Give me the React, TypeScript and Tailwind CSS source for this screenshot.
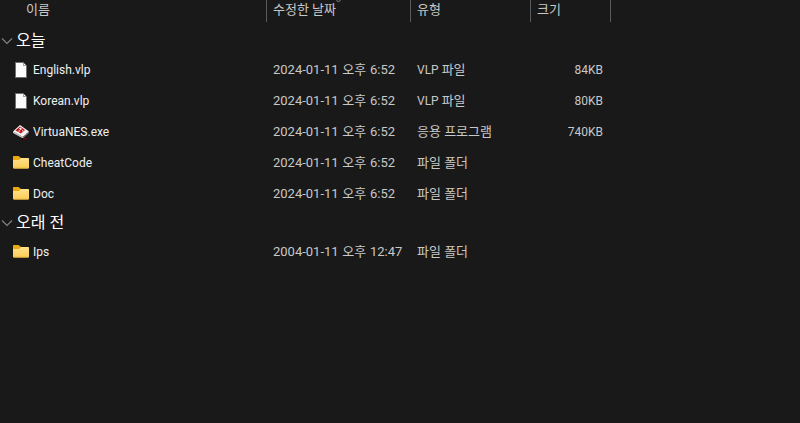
const FONT = "font-['Roboto','Noto_Sans_CJK_KR',sans-serif]";

type Kind = 'file' | 'exe' | 'folder';

// hangul runs in the reference are set noticeably larger than the latin ones
function Mixed({ text }: { text: string }) {
  return (
    <>
      {text.split(/([가-힣]+(?: [가-힣]+)*)/).map((part, i) =>
        /[가-힣]/.test(part) ? (
          <span key={i} className="text-[13px]">
            {part}
          </span>
        ) : (
          part
        )
      )}
    </>
  );
}

function Chevron() {
  return (
    <svg width="12" height="8" viewBox="0 0 12 8" className="text-[#858585]">
      <path d="M1 1.5L6 6.5L11 1.5" fill="none" stroke="currentColor" strokeWidth="1.1" />
    </svg>
  );
}

function FileIcon() {
  return (
    <svg width="16" height="16" viewBox="0 0 16 16" shapeRendering="crispEdges">
      <path d="M2.5 0.5H10.5L13.5 3.5V15.5H2.5Z" fill="#fcfcfc" stroke="#6e6e6e" />
      <path d="M10 1H11V3H13V4H10Z" fill="#a0a0a0" />
    </svg>
  );
}

function FolderIcon() {
  return (
    <svg width="16" height="16" viewBox="0 0 16 16">
      <defs>
        <linearGradient id="folderBody" x1="0" y1="0" x2="0" y2="1">
          <stop offset="0" stopColor="#ffe28a" />
          <stop offset="1" stopColor="#fbcd55" />
        </linearGradient>
      </defs>
      <path d="M0 2C0 1.4 .4 1 1 1H5.5L8 3V5H0Z" fill="#eba80f" />
      <path d="M0 5H6L8 3H15C15.6 3 16 3.4 16 4V12.5C16 13.2 15.6 13.5 15 13.5H1C.4 13.5 0 13.2 0 12.5Z" fill="url(#folderBody)" />
      <rect x="1" y="12.6" width="14" height="0.9" fill="#eeb93f" />
    </svg>
  );
}

function ExeIcon() {
  return (
    <svg width="16" height="16" viewBox="0 0 16 16">
      <path d="M0 7.5L7 1L16 7.5L10 13Z" fill="#f4f4f4" />
      <path d="M2.5 6.5L7 2.5L12 6L8 9.5Z" fill="#c4161c" />
      <path d="M6 4.5L7.5 3.5L9 5L7.5 6Z" fill="#f7f7f7" />
      <path d="M5 7L6.5 6L7.5 7L6 8Z" fill="#f3b5b5" />
      <path d="M9 6.5L10 6L10.5 7L9.5 7.5Z" fill="#f7f7f7" />
      <path d="M0 7.5L10 13V14.5L0 9Z" fill="#c9c9c9" />
      <path d="M10 13L16 7.5V9L10 14.5Z" fill="#7c6a6a" />
      <rect x="9" y="14" width="5" height="2" fill="#000" />
      <rect x="10" y="14.4" width="4" height="1" fill="#b3141a" />
    </svg>
  );
}

function RowIcon({ kind }: { kind: Kind }) {
  if (kind === 'folder') return <FolderIcon />;
  if (kind === 'exe') return <ExeIcon />;
  return <FileIcon />;
}

type Row = { name: string; date: string; type: string; size?: string; kind: Kind };

const today: Row[] = [
  { name: 'English.vlp', date: '2024-01-11 오후 6:52', type: 'VLP 파일', size: '84KB', kind: 'file' },
  { name: 'Korean.vlp', date: '2024-01-11 오후 6:52', type: 'VLP 파일', size: '80KB', kind: 'file' },
  { name: 'VirtuaNES.exe', date: '2024-01-11 오후 6:52', type: '응용 프로그램', size: '740KB', kind: 'exe' },
  { name: 'CheatCode', date: '2024-01-11 오후 6:52', type: '파일 폴더', kind: 'folder' },
  { name: 'Doc', date: '2024-01-11 오후 6:52', type: '파일 폴더', kind: 'folder' },
];

const older: Row[] = [
  { name: 'Ips', date: '2004-01-11 오후 12:47', type: '파일 폴더', kind: 'folder' },
];

function GroupHeader({ label }: { label: string }) {
  return (
    <div className="flex h-[27px] items-center">
      <span className="ml-[1px]">
        <Chevron />
      </span>
      <span className="ml-[3px] text-[16px] text-white">{label}</span>
    </div>
  );
}

function FileRow({ row }: { row: Row }) {
  return (
    <div className="flex h-[31px] items-center text-[12px] text-[#c8c8c8]">
      <div className="flex w-[266px] items-center pl-[13px]">
        <RowIcon kind={row.kind} />
        <span className="ml-[4px] text-[#f0f0f0]">{row.name}</span>
      </div>
      <div className="w-[144px] pl-[7px] text-[13px] [word-spacing:0.5px]">{row.date}</div>
      <div className="w-[120px] pl-[7px]">
        <Mixed text={row.type} />
      </div>
      <div className="w-[73px] text-right">{row.size}</div>
    </div>
  );
}

function HeaderCell({ label, className, sorted }: { label: string; className: string; sorted?: boolean }) {
  return (
    <div className={`relative h-[22px] border-r border-[#5a5a5a] pt-[1px] text-[13px] leading-[17px] text-[#c8c8c8] ${className}`}>
      {label}
      {sorted && (
        <svg width="5" height="3" viewBox="0 0 5 3" className="absolute left-[69px] top-0 text-[#8a8a8a]">
          <path d="M0.5 0L2.5 2L4.5 0" fill="none" stroke="currentColor" />
        </svg>
      )}
    </div>
  );
}

export default function App() {
  return (
    <div className={`h-[423px] w-[800px] overflow-hidden bg-[#191919] ${FONT}`}>
      <div className="flex">
        <HeaderCell label="이름" className="w-[267px] pl-[26px]" />
        <HeaderCell label="수정한 날짜" className="w-[144px] pl-[6px]" sorted />
        <HeaderCell label="유형" className="w-[120px] pl-[6px]" />
        <HeaderCell label="크기" className="w-[80px] pl-[6px]" />
      </div>
      <div className="pt-[5px]">
        <GroupHeader label="오늘" />
        {today.map((row) => (
          <FileRow key={row.name} row={row} />
        ))}
        <GroupHeader label="오래 전" />
        {older.map((row) => (
          <FileRow key={row.name} row={row} />
        ))}
      </div>
    </div>
  );
}
